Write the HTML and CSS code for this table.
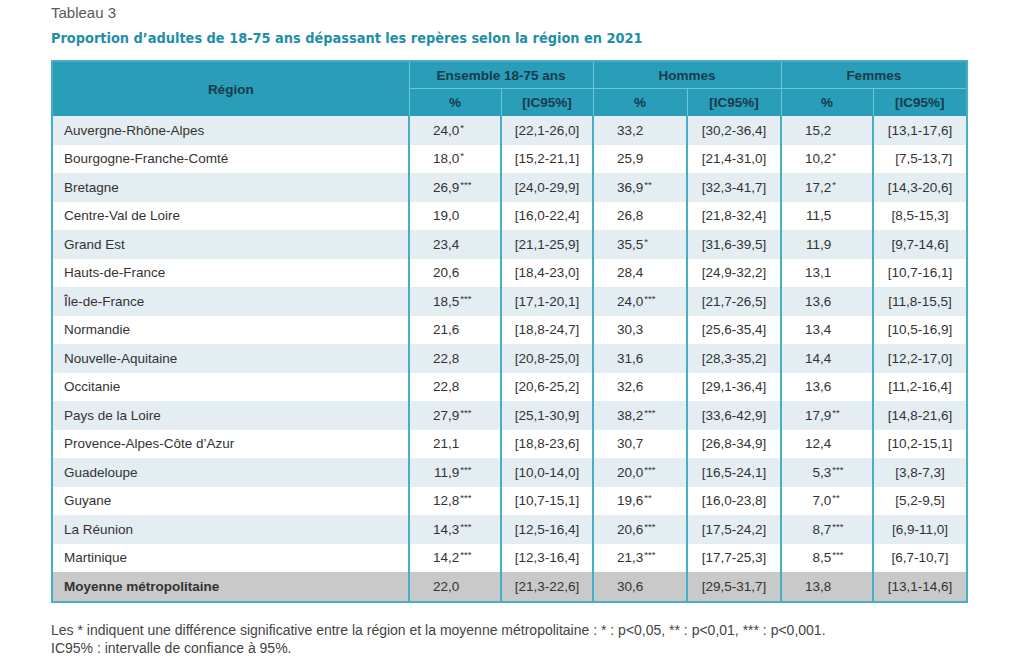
FILE: index.html
```html
<!DOCTYPE html>
<html lang="fr">
<head>
<meta charset="utf-8">
<title>Tableau 3</title>
<link rel="stylesheet" href="styles.css">
</head>
<body>
<div class="page">
  <p class="label">Tableau 3</p>
  <h1 class="title">Proportion d’adultes de 18-75 ans dépassant les repères selon la région en 2021</h1>
  <table class="data">
    <colgroup>
      <col class="c-reg"><col class="c-a"><col class="c-b"><col class="c-c"><col class="c-d"><col class="c-e"><col class="c-f">
    </colgroup>
    <thead>
      <tr class="h1">
        <th rowspan="2" class="reg-h">Région</th>
        <th colspan="2" class="grp">Ensemble 18-75 ans</th>
        <th colspan="2" class="grp">Hommes</th>
        <th colspan="2" class="grp">Femmes</th>
      </tr>
      <tr class="h2">
        <th class="sub">%</th><th class="sub">[IC95%]</th>
        <th class="sub">%</th><th class="sub">[IC95%]</th>
        <th class="sub">%</th><th class="sub">[IC95%]</th>
      </tr>
    </thead>
    <tbody>
      <tr><td class="reg">Auvergne-Rhône-Alpes</td><td class="pct"><span class="v">24,0</span><sup>*</sup></td><td class="ic">[22,1-26,0]</td><td class="pct"><span class="v">33,2</span></td><td class="ic">[30,2-36,4]</td><td class="pct"><span class="v">15,2</span></td><td class="ic">[13,1-17,6]</td></tr>
      <tr><td class="reg">Bourgogne-Franche-Comté</td><td class="pct"><span class="v">18,0</span><sup>*</sup></td><td class="ic">[15,2-21,1]</td><td class="pct"><span class="v">25,9</span></td><td class="ic">[21,4-31,0]</td><td class="pct"><span class="v">10,2</span><sup>*</sup></td><td class="ic">&nbsp;&nbsp;[7,5-13,7]</td></tr>
      <tr><td class="reg">Bretagne</td><td class="pct"><span class="v">26,9</span><sup>***</sup></td><td class="ic">[24,0-29,9]</td><td class="pct"><span class="v">36,9</span><sup>**</sup></td><td class="ic">[32,3-41,7]</td><td class="pct"><span class="v">17,2</span><sup>*</sup></td><td class="ic">[14,3-20,6]</td></tr>
      <tr><td class="reg">Centre-Val de Loire</td><td class="pct"><span class="v">19,0</span></td><td class="ic">[16,0-22,4]</td><td class="pct"><span class="v">26,8</span></td><td class="ic">[21,8-32,4]</td><td class="pct"><span class="v">11,5</span></td><td class="ic">[8,5-15,3]</td></tr>
      <tr><td class="reg">Grand Est</td><td class="pct"><span class="v">23,4</span></td><td class="ic">[21,1-25,9]</td><td class="pct"><span class="v">35,5</span><sup>*</sup></td><td class="ic">[31,6-39,5]</td><td class="pct"><span class="v">11,9</span></td><td class="ic">[9,7-14,6]</td></tr>
      <tr><td class="reg">Hauts-de-France</td><td class="pct"><span class="v">20,6</span></td><td class="ic">[18,4-23,0]</td><td class="pct"><span class="v">28,4</span></td><td class="ic">[24,9-32,2]</td><td class="pct"><span class="v">13,1</span></td><td class="ic">[10,7-16,1]</td></tr>
      <tr><td class="reg">Île-de-France</td><td class="pct"><span class="v">18,5</span><sup>***</sup></td><td class="ic">[17,1-20,1]</td><td class="pct"><span class="v">24,0</span><sup>***</sup></td><td class="ic">[21,7-26,5]</td><td class="pct"><span class="v">13,6</span></td><td class="ic">[11,8-15,5]</td></tr>
      <tr><td class="reg">Normandie</td><td class="pct"><span class="v">21,6</span></td><td class="ic">[18,8-24,7]</td><td class="pct"><span class="v">30,3</span></td><td class="ic">[25,6-35,4]</td><td class="pct"><span class="v">13,4</span></td><td class="ic">[10,5-16,9]</td></tr>
      <tr><td class="reg">Nouvelle-Aquitaine</td><td class="pct"><span class="v">22,8</span></td><td class="ic">[20,8-25,0]</td><td class="pct"><span class="v">31,6</span></td><td class="ic">[28,3-35,2]</td><td class="pct"><span class="v">14,4</span></td><td class="ic">[12,2-17,0]</td></tr>
      <tr><td class="reg">Occitanie</td><td class="pct"><span class="v">22,8</span></td><td class="ic">[20,6-25,2]</td><td class="pct"><span class="v">32,6</span></td><td class="ic">[29,1-36,4]</td><td class="pct"><span class="v">13,6</span></td><td class="ic">[11,2-16,4]</td></tr>
      <tr><td class="reg">Pays de la Loire</td><td class="pct"><span class="v">27,9</span><sup>***</sup></td><td class="ic">[25,1-30,9]</td><td class="pct"><span class="v">38,2</span><sup>***</sup></td><td class="ic">[33,6-42,9]</td><td class="pct"><span class="v">17,9</span><sup>**</sup></td><td class="ic">[14,8-21,6]</td></tr>
      <tr><td class="reg">Provence-Alpes-Côte d’Azur</td><td class="pct"><span class="v">21,1</span></td><td class="ic">[18,8-23,6]</td><td class="pct"><span class="v">30,7</span></td><td class="ic">[26,8-34,9]</td><td class="pct"><span class="v">12,4</span></td><td class="ic">[10,2-15,1]</td></tr>
      <tr><td class="reg">Guadeloupe</td><td class="pct"><span class="v">11,9</span><sup>***</sup></td><td class="ic">[10,0-14,0]</td><td class="pct"><span class="v">20,0</span><sup>***</sup></td><td class="ic">[16,5-24,1]</td><td class="pct"><span class="v">5,3</span><sup>***</sup></td><td class="ic">[3,8-7,3]</td></tr>
      <tr><td class="reg">Guyane</td><td class="pct"><span class="v">12,8</span><sup>***</sup></td><td class="ic">[10,7-15,1]</td><td class="pct"><span class="v">19,6</span><sup>**</sup></td><td class="ic">[16,0-23,8]</td><td class="pct"><span class="v">7,0</span><sup>**</sup></td><td class="ic">[5,2-9,5]</td></tr>
      <tr><td class="reg">La Réunion</td><td class="pct"><span class="v">14,3</span><sup>***</sup></td><td class="ic">[12,5-16,4]</td><td class="pct"><span class="v">20,6</span><sup>***</sup></td><td class="ic">[17,5-24,2]</td><td class="pct"><span class="v">8,7</span><sup>***</sup></td><td class="ic">[6,9-11,0]</td></tr>
      <tr><td class="reg">Martinique</td><td class="pct"><span class="v">14,2</span><sup>***</sup></td><td class="ic">[12,3-16,4]</td><td class="pct"><span class="v">21,3</span><sup>***</sup></td><td class="ic">[17,7-25,3]</td><td class="pct"><span class="v">8,5</span><sup>***</sup></td><td class="ic">[6,7-10,7]</td></tr>
      <tr class="avg"><td class="reg">Moyenne métropolitaine</td><td class="pct"><span class="v">22,0</span></td><td class="ic">[21,3-22,6]</td><td class="pct"><span class="v">30,6</span></td><td class="ic">[29,5-31,7]</td><td class="pct"><span class="v">13,8</span></td><td class="ic">[13,1-14,6]</td></tr>
    </tbody>
  </table>
  <div class="notes">
    <p>Les * indiquent une différence significative entre la région et la moyenne métropolitaine : * : p&lt;0,05, ** : p&lt;0,01, *** : p&lt;0,001.</p>
    <p>IC95% : intervalle de confiance à 95%.</p>
  </div>
</div>
</body>
</html>
```

FILE: styles.css
```css
html, body {
  margin: 0;
  padding: 0;
  background: #ffffff;
}

body {
  font-family: "Liberation Sans", Arial, sans-serif;
  color: #333333;
}

.page {
  padding: 4px 0 0 51px;
}

.label {
  margin: 0;
  font-size: 15px;
  line-height: 18px;
  color: #585858;
}

.title {
  margin: 7px 0 0 0;
  font-family: "DejaVu Sans Condensed", "Liberation Sans", sans-serif;
  font-size: 14.4px;
  line-height: 18px;
  font-weight: bold;
  color: #1f8ea8;
}

.data {
  margin-top: 13px;
  width: 915px;
  border-collapse: collapse;
  table-layout: fixed;
  font-size: 13.5px;
  border: 2px solid #46aec5;
}

.c-reg { width: 357px; }
.c-a { width: 92px; }
.c-b { width: 92px; }
.c-c { width: 94px; }
.c-d { width: 94px; }
.c-e { width: 92px; }
.c-f { width: 94px; }

.data thead th {
  background: #2a9db8;
  color: #173c4c;
  font-weight: bold;
  font-size: 13.5px;
  text-align: center;
  padding: 0;
}

.h1 th { height: 26px; }
.h2 th { height: 27px; }

.data thead .grp,
.data thead .sub {
  border-left: 1px solid #6cc6d8;
}

.data thead .sub {
  border-top: 1px solid #6cc6d8;
}

.data tbody td {
  height: 28.5px;
  padding: 0;
  white-space: nowrap;
}

.data tbody tr:nth-child(odd) {
  background: #e4edf2;
}

.data tbody tr:nth-child(even) {
  background: #ffffff;
}

.data tbody tr.avg {
  background: #c9c9ca;
  font-weight: bold;
}

.data tbody tr.avg .pct,
.data tbody tr.avg .ic {
  font-weight: normal;
}

.reg {
  padding-left: 11px !important;
  text-align: left;
}

.pct,
.ic {
  border-left: 2px solid #46aec5;
}

.pct {
  padding-left: 23px !important;
  text-align: left;
}

.ic {
  text-align: center;
}

.v {
  display: inline-block;
  min-width: 1.95em;
  text-align: right;
}

sup {
  font-size: 9.5px;
  line-height: 0;
  vertical-align: 4px;
  margin-left: 1px;
}

.notes {
  margin-top: 18px;
  font-size: 14px;
  line-height: 18px;
  color: #444444;
}

.notes p {
  margin: 0;
}
```
